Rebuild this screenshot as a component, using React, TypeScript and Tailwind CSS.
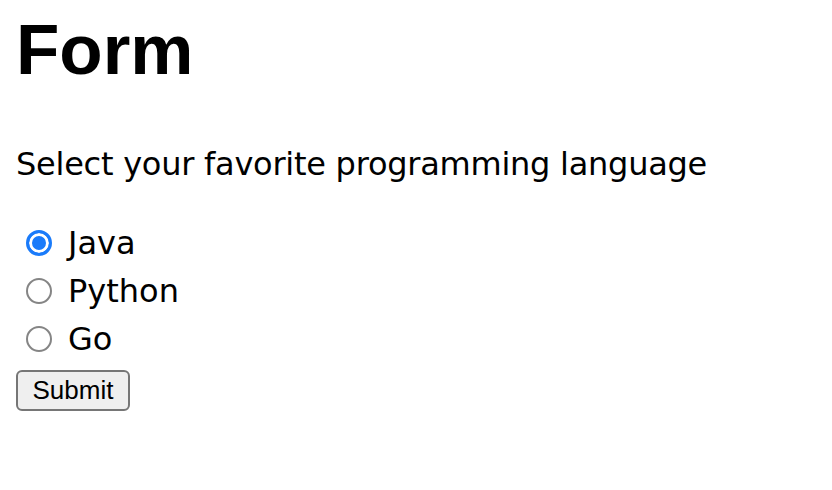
import React, { useState } from 'react';

const languages = ['Java', 'Python', 'Go'];

export default function App() {
  const [lang, setLang] = useState('Java');

  return (
    <div className="px-[16px] pt-[10px] font-['DejaVu_Sans',sans-serif] text-black bg-white">
      <h1 className="font-['Liberation_Sans',Arial,sans-serif] text-[71px] font-bold leading-[80px]">Form</h1>
      <p className="mt-[50px] text-[32px] leading-[48px] tracking-[-0.25px]">Select your favorite programming language</p>

      <form onSubmit={e => e.preventDefault()}>
        <div className="mt-[31px] flex flex-col">
          {languages.map(name => (
            <label key={name} className="flex items-center h-[48px] text-[32px]">
              <input
                type="radio"
                name="language"
                value={name}
                checked={lang === name}
                onChange={() => setLang(name)}
                className="appearance-none ml-[10px] w-[26px] h-[26px] rounded-full border-2 border-[#858585] bg-white checked:border-[3px] checked:border-[#1a7bfa] checked:bg-[#1a7bfa] checked:shadow-[inset_0_0_0_3px_white]"
              />
              <span className="ml-[16px]">{name}</span>
            </label>
          ))}
        </div>
        <button
          type="submit"
          className="mt-[7px] w-[114px] h-[41px] flex items-center justify-center bg-[#efefef] border-2 border-[#767676] rounded-[6px] font-['Liberation_Sans',Arial,sans-serif] text-[26px]"
        >
          Submit
        </button>
      </form>
    </div>
  );
}
